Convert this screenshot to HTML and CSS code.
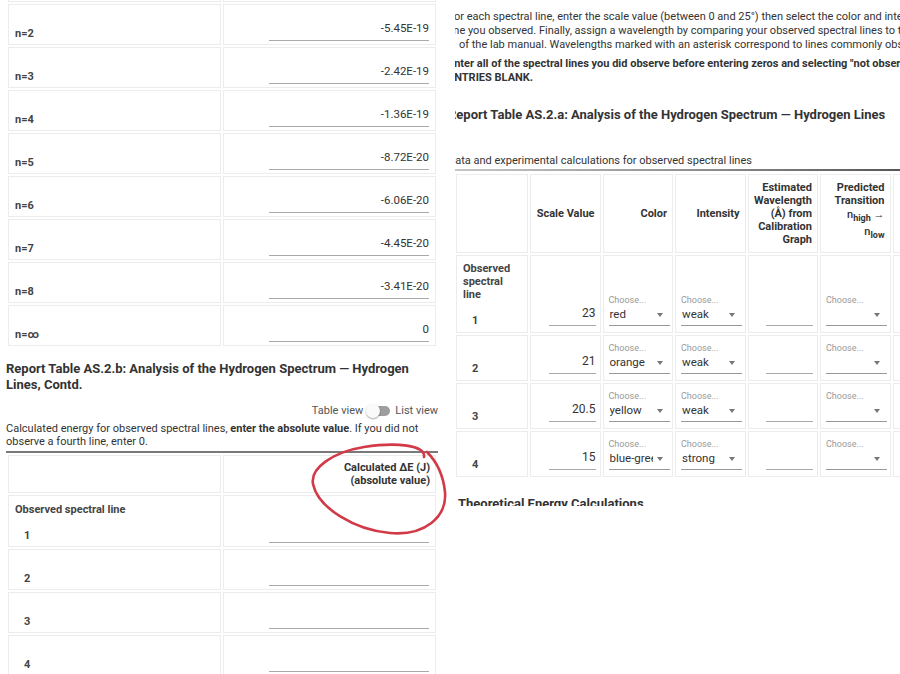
FILE: index.html
```html
<!DOCTYPE html>
<html lang="en">

<head>
    <meta charset="UTF-8">
    <meta name="viewport" content="width=device-width, initial-scale=1.0">
    <title>Hydrogen Spectrum Report</title>
    <link rel="stylesheet" href="styles.css">
</head>

<body>
    <div class="page">
        <!-- left half: energy levels + AS.2.b -->
        <section class="pane pane-left">
            <div class="pane-inner">
                <table class="grid levels">
                    <tr><td class="label">n=1</td><td class="value"><span class="field">-2.18E-18</span></td></tr>
                    <tr><td class="label">n=2</td><td class="value"><span class="field">-5.45E-19</span></td></tr>
                    <tr><td class="label">n=3</td><td class="value"><span class="field">-2.42E-19</span></td></tr>
                    <tr><td class="label">n=4</td><td class="value"><span class="field">-1.36E-19</span></td></tr>
                    <tr><td class="label">n=5</td><td class="value"><span class="field">-8.72E-20</span></td></tr>
                    <tr><td class="label">n=6</td><td class="value"><span class="field">-6.06E-20</span></td></tr>
                    <tr><td class="label">n=7</td><td class="value"><span class="field">-4.45E-20</span></td></tr>
                    <tr><td class="label">n=8</td><td class="value"><span class="field">-3.41E-20</span></td></tr>
                    <tr><td class="label">n=∞</td><td class="value"><span class="field">0</span></td></tr>
                </table>

                <h2 class="report-title">Report Table AS.2.b: Analysis of the Hydrogen Spectrum — Hydrogen Lines, Contd.</h2>

                <div class="view-toggle">
                    <span>Table view</span>
                    <span class="switch"><span class="knob"></span></span>
                    <span>List view</span>
                </div>

                <p class="caption">Calculated energy for observed spectral lines, <strong>enter the absolute value</strong>. If you did not observe a fourth line, enter 0.</p>

                <table class="grid energies">
                    <tr class="head-row"><th></th><th>Calculated ΔE (J)<br>(absolute value)</th></tr>
                    <tr class="first"><td class="label">Observed spectral line<span class="num">1</span></td><td class="value"><span class="field"></span></td></tr>
                    <tr><td class="label"><span class="num">2</span></td><td class="value"><span class="field"></span></td></tr>
                    <tr><td class="label"><span class="num">3</span></td><td class="value"><span class="field"></span></td></tr>
                    <tr><td class="label"><span class="num">4</span></td><td class="value"><span class="field"></span></td></tr>
                </table>
            </div>

            <svg class="scribble" width="453" height="674" viewBox="0 0 453 674">
                <path d="M424 457 C426 445 396 442 364 447 C333 452 310 468 313 484 C318 508 355 530 390 533 C425 536 447 517 445 492 C443 472 436 461 427 452" />
            </svg>
        </section>

        <!-- right half: AS.2.a -->
        <section class="pane pane-right">
            <div class="pane-inner">
                <p class="intro">For each spectral line, enter the scale value (between 0 and 25°) then select the color and intensity of the<br>line you observed. Finally, assign a wavelength by comparing your observed spectral lines to the<br>&nbsp;&nbsp;&nbsp; of the lab manual. Wavelengths marked with an asterisk correspond to lines commonly observed.</p>
                <p class="intro warn">Enter all of the spectral lines you did observe before entering zeros and selecting "not observed". DO NOT LEAVE<br>ENTRIES BLANK.</p>

                <h2 class="report-title">Report Table AS.2.a: Analysis of the Hydrogen Spectrum — Hydrogen Lines</h2>

                <p class="caption">Data and experimental calculations for observed spectral lines</p>

                <table class="grid lines">
                    <colgroup>
                        <col class="col-label">
                        <col class="col-data">
                        <col class="col-data">
                        <col class="col-data">
                        <col class="col-data">
                        <col class="col-data">
                        <col class="col-rest">
                    </colgroup>
                    <tr class="head-row">
                        <th></th>
                        <th>Scale Value</th>
                        <th>Color</th>
                        <th>Intensity</th>
                        <th>Estimated Wavelength (Å) from Calibration Graph</th>
                        <th class="transition">
                            <span class="t-line">Predicted</span>
                            <span class="t-line">Transition</span>
                            <span class="t-line t-sub">n<sub>high</sub> →</span>
                            <span class="t-line t-sub low">n<sub>low</sub></span>
                        </th>
                        <th></th>
                    </tr>
                    <tr class="first">
                        <td class="label">Observed spectral line<span class="num">1</span></td>
                        <td class="value"><span class="field short">23</span></td>
                        <td><div class="select"><span class="hint">Choose...</span><div class="select-box"><span class="select-value">red</span><span class="caret"></span></div></div></td>
                        <td><div class="select"><span class="hint">Choose...</span><div class="select-box"><span class="select-value">weak</span><span class="caret"></span></div></div></td>
                        <td class="value"><span class="field short"></span></td>
                        <td><div class="select"><span class="hint">Choose...</span><div class="select-box"><span class="select-value"></span><span class="caret"></span></div></div></td>
                        <td></td>
                    </tr>
                    <tr>
                        <td class="label"><span class="num">2</span></td>
                        <td class="value"><span class="field short">21</span></td>
                        <td><div class="select"><span class="hint">Choose...</span><div class="select-box"><span class="select-value">orange</span><span class="caret"></span></div></div></td>
                        <td><div class="select"><span class="hint">Choose...</span><div class="select-box"><span class="select-value">weak</span><span class="caret"></span></div></div></td>
                        <td class="value"><span class="field short"></span></td>
                        <td><div class="select"><span class="hint">Choose...</span><div class="select-box"><span class="select-value"></span><span class="caret"></span></div></div></td>
                        <td></td>
                    </tr>
                    <tr>
                        <td class="label"><span class="num">3</span></td>
                        <td class="value"><span class="field short">20.5</span></td>
                        <td><div class="select"><span class="hint">Choose...</span><div class="select-box"><span class="select-value">yellow</span><span class="caret"></span></div></div></td>
                        <td><div class="select"><span class="hint">Choose...</span><div class="select-box"><span class="select-value">weak</span><span class="caret"></span></div></div></td>
                        <td class="value"><span class="field short"></span></td>
                        <td><div class="select"><span class="hint">Choose...</span><div class="select-box"><span class="select-value"></span><span class="caret"></span></div></div></td>
                        <td></td>
                    </tr>
                    <tr>
                        <td class="label"><span class="num">4</span></td>
                        <td class="value"><span class="field short">15</span></td>
                        <td><div class="select"><span class="hint">Choose...</span><div class="select-box"><span class="select-value">blue-green</span><span class="caret"></span></div></div></td>
                        <td><div class="select"><span class="hint">Choose...</span><div class="select-box"><span class="select-value">strong</span><span class="caret"></span></div></div></td>
                        <td class="value"><span class="field short"></span></td>
                        <td><div class="select"><span class="hint">Choose...</span><div class="select-box"><span class="select-value"></span><span class="caret"></span></div></div></td>
                        <td></td>
                    </tr>
                </table>

                <h3 class="section-title">Theoretical Energy Calculations</h3>
            </div>
        </section>
    </div>
</body>

</html>
```

FILE: styles.css
```css
body {
    margin: 0;
    font-family: Roboto, 'Noto Sans', sans-serif;
    color: #333;
    background-color: #fff;
}

.page {
    display: flex;
    width: 900px;
    height: 674px;
    overflow: hidden;
}

.pane {
    overflow: hidden;
    flex: none;
}

.pane-left {
    position: relative;
    width: 453px;
    height: 674px;
}

.pane-left .pane-inner {
    width: 432px;
    padding-left: 6px;
}

.pane-right {
    width: 445px;
    height: 506px;
    margin-left: 2px;
}

.pane-right .pane-inner {
    width: 520px;
    margin-left: -7px;
}

/* tables */
.grid {
    border-collapse: separate;
    border-spacing: 2px;
    table-layout: fixed;
}

.grid td,
.grid th {
    border: 1px solid #ececec;
    box-sizing: border-box;
    vertical-align: bottom;
    padding: 0 6px 3px 6px;
}

.grid th {
    vertical-align: middle;
    text-align: right;
    font-size: 11px;
    line-height: 13px;
    font-weight: 700;
    padding: 6px 5px 6px 4px;
}

.label {
    font-size: 11px;
    line-height: 14px;
    font-weight: 700;
    color: #444;
}

.num {
    display: block;
    padding-left: 9px;
    margin-top: 12px;
}

.value {
    text-align: right;
}

.field {
    display: inline-block;
    width: 160px;
    height: 14px;
    padding-bottom: 5px;
    border-bottom: 1px solid #aaa;
    font-size: 11.5px;
    line-height: 14px;
    text-align: right;
    vertical-align: bottom;
}

.levels {
    width: 432px;
    margin-top: -41px;
}

.levels td {
    height: 41px;
}

.energies {
    width: 432px;
}

.energies .head-row th {
    height: 35px;
    padding-top: 5px;
    padding-bottom: 5px;
}

.energies td {
    height: 41px;
}

.energies .first .label {
    padding-top: 7px;
}

/* headings & text */
.report-title {
    margin: 13px 0 0 0;
    font-size: 13px;
    line-height: 16px;
    font-weight: 700;
    color: #333;
}

.view-toggle {
    display: flex;
    justify-content: flex-end;
    align-items: center;
    gap: 3px;
    margin-top: 11px;
    font-size: 11px;
    line-height: 14px;
    color: #555;
}

.switch {
    position: relative;
    display: inline-block;
    width: 22px;
    height: 10px;
    margin: 0 2px;
    border-radius: 5px;
    background-color: #9e9e9e;
}

.knob {
    position: absolute;
    left: -2px;
    top: -2px;
    width: 14px;
    height: 14px;
    border-radius: 50%;
    background-color: #fafafa;
    box-shadow: 0 1px 2px rgba(0, 0, 0, 0.35);
}

.caption {
    margin: 4px 0 0 0;
    padding-bottom: 3px;
    font-size: 11px;
    line-height: 13px;
    border-bottom: 2px solid #7a7a7a;
}

.scribble {
    position: absolute;
    left: 0;
    top: 0;
    pointer-events: none;
}

.scribble path {
    fill: none;
    stroke: #d23a48;
    stroke-width: 2.6;
    stroke-linecap: round;
}

/* right pane */
.intro {
    margin: 10px 0 0 0;
    font-size: 11px;
    line-height: 14px;
    white-space: nowrap;
}

.intro.warn {
    margin-top: 5px;
    font-weight: 700;
}

.pane-right .report-title {
    margin-top: 22px;
}

.pane-right .caption {
    margin-top: 31px;
    padding-bottom: 1px;
    line-height: 14px;
    border-bottom: none;
}

.pane-right .caption::after {
    content: "";
    display: block;
    height: 2px;
    margin-top: 1px;
    width: 452px;
    background: linear-gradient(to right, #c8c8c8, #8a8a8a 60%, #555);
}

.lines {
    width: 500px;
    margin-left: 6px;
}

.col-label {
    width: 72px;
}

.col-data {
    width: 70.5px;
}

.col-rest {
    width: 60px;
}

.lines .head-row th {
    height: 79px;
}

.lines .transition {
    vertical-align: top;
    padding-top: 6px;
}

.t-line {
    display: block;
    line-height: 13px;
}

.t-line.t-sub {
    height: 15px;
    line-height: 15px;
    font-size: 11px;
    font-weight: 500;
}

.t-line.low {
    height: 18px;
    line-height: 20px;
}

.t-line sub {
    font-size: 9px;
    font-weight: 700;
    line-height: 0;
}

.lines td {
    height: 46px;
    padding: 0 4px 6px 5px;
}

.lines .first td {
    height: 77px;
}

.lines .label {
    padding: 6px 6px 4px 6px;
    line-height: 13px;
}

.lines .label .num {
    line-height: 14px;
    margin-top: 13px;
}

.lines .field.short {
    width: 47px;
    font-size: 12px;
    line-height: 16px;
    height: 16px;
    padding-bottom: 4px;
}

.select {
    width: 61px;
}

.hint {
    display: block;
    font-size: 9px;
    line-height: 12px;
    color: #999;
}

.select-box {
    display: flex;
    align-items: center;
    height: 16px;
    padding: 0 0 3px 1px;
    border-bottom: 1px solid #999;
}

.select-value {
    flex: 1;
    overflow: hidden;
    white-space: nowrap;
    font-size: 11.5px;
    line-height: 16px;
    color: #333;
}

.caret {
    flex: none;
    width: 0;
    height: 0;
    margin: 2px 7px 0 4px;
    border-left: 3.5px solid transparent;
    border-right: 3.5px solid transparent;
    border-top: 4px solid #777;
}

.section-title {
    margin: 17px 0 0 0;
    padding-left: 10px;
    font-size: 13px;
    line-height: 16px;
    font-weight: 700;
}
```
